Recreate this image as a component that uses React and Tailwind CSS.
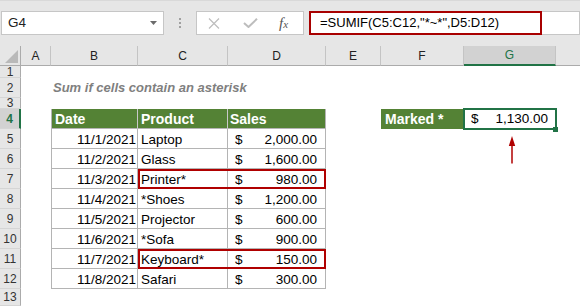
import React from 'react';

const rows = [
  { n: 5, date: '11/1/2021', product: 'Laptop', sales: '2,000.00' },
  { n: 6, date: '11/2/2021', product: 'Glass', sales: '1,600.00' },
  { n: 7, date: '11/3/2021', product: 'Printer*', sales: '980.00', marked: true },
  { n: 8, date: '11/4/2021', product: '*Shoes', sales: '1,200.00' },
  { n: 9, date: '11/5/2021', product: 'Projector', sales: '600.00' },
  { n: 10, date: '11/6/2021', product: '*Sofa', sales: '900.00' },
  { n: 11, date: '11/7/2021', product: 'Keyboard*', sales: '150.00', marked: true },
  { n: 12, date: '11/8/2021', product: 'Safari', sales: '300.00' },
];

const colHeads = [
  { l: 'A', w: 'w-[30px]' },
  { l: 'B', w: 'w-[87px]' },
  { l: 'C', w: 'w-[90px]' },
  { l: 'D', w: 'w-[98px]' },
  { l: 'E', w: 'w-[55px]' },
  { l: 'F', w: 'w-[83px]' },
  { l: 'G', w: 'w-[92px]', active: true },
];

const RowHead = ({ n, active }) => (
  <div
    className={`w-[21px] shrink-0 flex items-center justify-center overflow-hidden border-b border-b-[#d5d5d5] text-[12px] ${
      active
        ? 'bg-[#d2d2d2] text-[#217346] border-r-2 border-r-[#217346]'
        : 'bg-[#e6e6e6] text-[#333] border-r border-r-[#ababab]'
    }`}
  >
    {n}
  </div>
);

const Toolbar = () => (
  <div className="h-[46px] bg-[#e6e6e6] border-t border-[#d9d9d9] flex items-start pt-[10px]">
    <div className="ml-[1px] w-[163px] h-[24px] bg-white border border-[#c6c6c6] flex items-center justify-between pl-[6px] pr-[6px] text-[13.5px] text-[#222]">
      <span>G4</span>
      <svg width="7" height="4">
        <polygon points="0,0 7,0 3.5,4" fill="#6b6b6b" />
      </svg>
    </div>
    <div className="w-[32px] h-[24px] flex flex-col items-center justify-center gap-[2px]">
      <span className="w-[2px] h-[2px] bg-[#a0a0a0]" />
      <span className="w-[2px] h-[2px] bg-[#a0a0a0]" />
      <span className="w-[2px] h-[2px] bg-[#a0a0a0]" />
    </div>
    <div className="w-[108px] h-[24px] bg-white border border-[#c6c6c6] flex items-center pl-[11px]">
      <svg width="12" height="11" viewBox="0 0 12 11">
        <path d="M1 0.5 L11 10.5 M11 0.5 L1 10.5" stroke="#bdbdbd" strokeWidth="1.2" fill="none" />
      </svg>
      <svg className="ml-[23px]" width="15" height="10" viewBox="0 0 15 10">
        <path d="M1 5 L5.5 9 L14 0.8" stroke="#bdbdbd" strokeWidth="2" fill="none" />
      </svg>
      <span className="ml-[21px] font-['Liberation_Serif',serif] italic text-[15px] text-[#555] leading-none">
        f<span className="text-[11px]">x</span>
      </span>
    </div>
    <div className="ml-[5px] flex-1 flex h-[24px]">
      <div className="w-[233px] h-[24px] border-2 border-[#a80000] bg-white flex items-center pl-[9px] text-[13px] text-black whitespace-nowrap">
        {'=SUMIF(C5:C12,"*~*",D5:D12)'}
      </div>
      <div className="flex-1 h-[24px] bg-white border-y border-r border-[#c6c6c6]" />
    </div>
  </div>
);

const ColumnHeaders = () => (
  <div className="flex h-[20px]">
    <div className="w-[21px] shrink-0 bg-[#e6e6e6] border-r border-b border-[#ababab] flex items-end justify-end p-[2px]">
      <svg width="13" height="13">
        <polygon points="13,0 13,13 0,13" fill="#b9b9b9" />
      </svg>
    </div>
    {colHeads.map((c) => (
      <div
        key={c.l}
        className={`${c.w} shrink-0 flex items-center justify-center text-[12px] border-r border-r-[#c4c4c4] ${
          c.active
            ? 'bg-[#d2d2d2] text-[#217346] border-b-2 border-b-[#217346]'
            : 'bg-[#e6e6e6] text-[#222] border-b border-b-[#ababab]'
        }`}
      >
        {c.l}
      </div>
    ))}
    <div className="flex-1 bg-[#e6e6e6] border-b border-[#ababab]" />
  </div>
);

const DataRow = ({ r }) => (
  <div className="flex h-[20px] text-[13.5px] leading-[16px] text-black">
    <RowHead n={r.n} />
    <div className="w-[30px] shrink-0" />
    <div className="w-[87px] shrink-0 border-l border-r border-b border-[#b4b4b4] flex items-end justify-end pr-[1px]">
      {r.date}
    </div>
    <div className={`flex ${r.marked ? 'relative z-10 outline-2 outline-[#b00000] -outline-offset-2' : ''}`}>
      <div className="w-[90px] shrink-0 border-r border-b border-[#b4b4b4] flex items-end pl-[3px]">
        {r.product}
      </div>
      <div className="w-[98px] shrink-0 border-r border-b border-[#b4b4b4] flex items-end justify-between pl-[7px] pr-[8px]">
        <span>$</span>
        <span>{r.sales}</span>
      </div>
    </div>
  </div>
);

const App = () => {
  return (
    <div className="relative w-[580px] h-[306px] overflow-hidden bg-white font-['Liberation_Sans',Arial,sans-serif]">
      <Toolbar />
      <ColumnHeaders />

      {/* row 1 */}
      <div className="flex h-[12px]">
        <RowHead n={1} />
      </div>

      {/* row 2 - title */}
      <div className="flex h-[20px]">
        <RowHead n={2} />
        <div className="w-[30px] shrink-0" />
        <div className="flex items-end pb-[2px] pl-[2px] whitespace-nowrap text-[13px] leading-[16px] font-bold italic text-[#7f7f7f]">
          Sum if cells contain an asterisk
        </div>
      </div>

      {/* row 3 */}
      <div className="flex h-[11px]">
        <RowHead n={3} />
      </div>

      {/* row 4 - headers */}
      <div className="flex h-[20px] text-[14px] leading-[16px] font-bold text-white">
        <RowHead n={4} active />
        <div className="w-[30px] shrink-0" />
        <div className="w-[87px] shrink-0 bg-[#548235] border-l border-r border-b border-l-[#b4b4b4] border-r-[#c8c8c8] border-b-[#b4b4b4] flex items-end pb-[1px] pl-[3px]">
          Date
        </div>
        <div className="w-[90px] shrink-0 bg-[#548235] border-r border-b border-r-[#c8c8c8] border-b-[#b4b4b4] flex items-end pb-[1px] pl-[3px]">
          Product
        </div>
        <div className="w-[98px] shrink-0 bg-[#548235] border-r border-b border-[#b4b4b4] flex items-end pb-[1px] pl-[2px]">
          Sales
        </div>
        <div className="w-[55px] shrink-0" />
        <div className="w-[83px] shrink-0 bg-[#548235] flex items-end pb-[2px] pl-[4px]">Marked *</div>
        <div className="relative w-[92px] shrink-0 outline-2 outline-[#217346] -outline-offset-1 flex items-end justify-between pb-[2px] pl-[7px] pr-[8px] font-normal text-[13.5px] text-black">
          <span>$</span>
          <span>1,130.00</span>
          <span className="absolute right-[-2px] bottom-[-3px] w-[5px] h-[5px] bg-[#217346]" />
        </div>
      </div>

      {rows.map((r) => (
        <DataRow key={r.n} r={r} />
      ))}

      {/* row 13 */}
      <div className="flex h-[17px]">
        <RowHead n={13} />
      </div>

      {/* arrow pointing at the result */}
      <svg className="absolute left-[506px] top-[136px]" width="12" height="28" viewBox="0 0 12 28">
        <polygon points="6,0 2.8,10 9.2,10" fill="#b00000" />
        <line x1="6" y1="9" x2="6" y2="27.5" stroke="#b00000" strokeWidth="1.5" />
      </svg>
    </div>
  );
};

export default App;
